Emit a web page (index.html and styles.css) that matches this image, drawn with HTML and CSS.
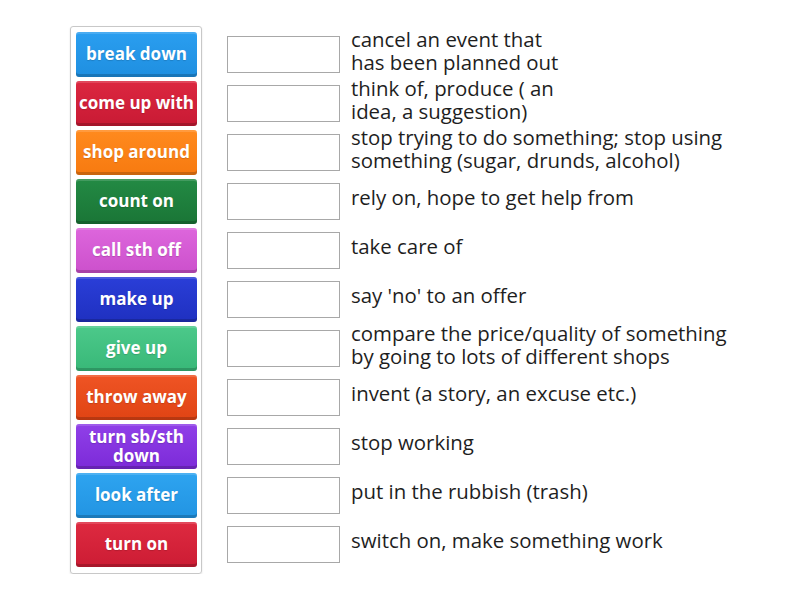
FILE: index.html
```html
<!DOCTYPE html>
<html>
<head>
<meta charset="utf-8">
<link rel="stylesheet" href="styles.css">
</head>
<body>
<div class="game">
  <div class="bank">
    <div class="tile c1">break down</div>
    <div class="tile c2">come up with</div>
    <div class="tile c3">shop around</div>
    <div class="tile c4">count on</div>
    <div class="tile c5">call sth off</div>
    <div class="tile c6">make up</div>
    <div class="tile c7">give up</div>
    <div class="tile c8">throw away</div>
    <div class="tile c9">turn sb/sth<br>down</div>
    <div class="tile c10">look after</div>
    <div class="tile c11">turn on</div>
  </div>
  <div class="rows">
    <div class="row"><div class="slot"></div><div class="def">cancel an event that<br>has been planned out</div></div>
    <div class="row"><div class="slot"></div><div class="def">think of, produce ( an<br>idea, a suggestion)</div></div>
    <div class="row"><div class="slot"></div><div class="def">stop trying to do something; stop using<br>something (sugar, drunds, alcohol)</div></div>
    <div class="row"><div class="slot"></div><div class="def">rely on, hope to get help from</div></div>
    <div class="row"><div class="slot"></div><div class="def">take care of</div></div>
    <div class="row"><div class="slot"></div><div class="def">say 'no' to an offer</div></div>
    <div class="row"><div class="slot"></div><div class="def">compare the price/quality of something<br>by going to lots of different shops</div></div>
    <div class="row"><div class="slot"></div><div class="def">invent (a story, an excuse etc.)</div></div>
    <div class="row"><div class="slot"></div><div class="def">stop working</div></div>
    <div class="row"><div class="slot"></div><div class="def">put in the rubbish (trash)</div></div>
    <div class="row"><div class="slot"></div><div class="def">switch on, make something work</div></div>
  </div>
</div>
</body>
</html>
```
FILE: styles.css
```css
html, body {
  margin: 0;
  padding: 0;
  background: #fff;
}
body {
  font-family: "Open Sans", "Liberation Sans", sans-serif;
}
.game {
  display: flex;
  align-items: flex-start;
  padding: 26px 0 0 70px;
}
.bank {
  width: 120px;
  border: 1px solid #c8c8c8;
  border-radius: 3px;
  padding: 5px 5px 6px 5px;
  display: flex;
  flex-direction: column;
  gap: 4px;
  box-shadow: 0 1px 2px rgba(0,0,0,0.12);
}
.tile {
  height: 45px;
  width: 121px;
  box-sizing: border-box;
  border-radius: 3px;
  display: flex;
  align-items: center;
  justify-content: center;
  text-align: center;
  color: #fff;
  font-weight: 700;
  font-size: 17px;
  line-height: 19px;
  padding-bottom: 2px;
  box-shadow: inset 0 -3px 0 rgba(0,0,0,0.18), inset 0 2px 0 rgba(255,255,255,0.15);
  text-shadow: 0 1px 1px rgba(0,0,0,0.15);
  white-space: nowrap;
}
.c1 { background: linear-gradient(#2a9ef0, #1f8fe0); }
.c2 { background: linear-gradient(#dc2740, #c81a34); }
.c3 { background: linear-gradient(#ff8a1e, #f77a10); }
.c4 { background: linear-gradient(#238a44, #1a7536); }
.c5 { background: linear-gradient(#dd66dc, #cc50cc); }
.c6 { background: linear-gradient(#2a3ed8, #1f30c0); }
.c7 { background: linear-gradient(#4cc98a, #38b878); }
.c8 { background: linear-gradient(#ef5424, #e04414); }
.c9 { background: linear-gradient(#9040e8, #7c2ad8); }
.c10 { background: linear-gradient(#2ea4f0, #2294e2); }
.c11 { background: linear-gradient(#de2a40, #cc1c34); }
.rows {
  margin-left: 25px;
  padding-top: 6px;
  display: flex;
  flex-direction: column;
  gap: 4px;
}
.row {
  height: 45px;
  display: flex;
  align-items: center;
}
.slot {
  width: 111px;
  height: 35px;
  border: 1px solid #a8a8a8;
  background: #fff;
  flex: none;
}
.def {
  margin-left: 11px;
  font-size: 20.4px;
  line-height: 23.5px;
  color: #1e1e1e;
  white-space: nowrap;
  padding-bottom: 7px;
}
```
